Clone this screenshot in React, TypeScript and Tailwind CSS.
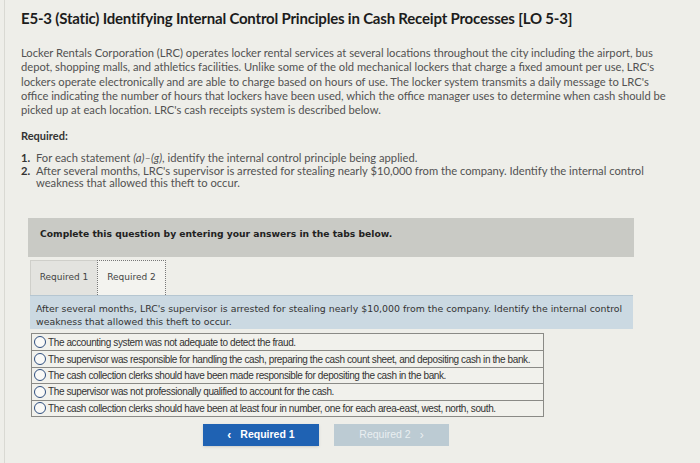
const PARAGRAPH = [
  "Locker Rentals Corporation (LRC) operates locker rental services at several locations throughout the city including the airport, bus",
  "depot, shopping malls, and athletics facilities. Unlike some of the old mechanical lockers that charge a fixed amount per use, LRC's",
  "lockers operate electronically and are able to charge based on hours of use. The locker system transmits a daily message to LRC's",
  "office indicating the number of hours that lockers have been used, which the office manager uses to determine when cash should be",
  "picked up at each location. LRC's cash receipts system is described below.",
];

const OPTIONS = [
  "The accounting system was not adequate to detect the fraud.",
  "The supervisor was responsible for handling the cash, preparing the cash count sheet, and depositing cash in the bank.",
  "The cash collection clerks should have been made responsible for depositing the cash in the bank.",
  "The supervisor was not professionally qualified to account for the cash.",
  "The cash collection clerks should have been at least four in number, one for each area-east, west, north, south.",
];

function Radio() {
  return (
    <span className="shrink-0 w-[12px] h-[12px] rounded-full border-[1.5px] border-[#2f4f7f] bg-white/60 mr-[2px]" />
  );
}

export default function App() {
  return (
    <div className="w-[700px] h-[463px] overflow-hidden bg-[#eeeee9] font-['Lato','Open_Sans',sans-serif]">
      <div className="ml-[4px] h-full border-l border-[#d9d9d3] pl-[16px] pt-[8px]">
        {/* Title */}
        <h1 className="text-[15px] leading-[20px] font-bold text-[#1c1c1c] tracking-[-0.2px]">
          E5-3 (Static) Identifying Internal Control Principles in Cash Receipt Processes [LO 5-3]
        </h1>

        {/* Problem text */}
        <p className="mt-[18px] text-[11.2px] leading-[14.3px] text-[#525252] whitespace-nowrap">
          {PARAGRAPH.map((line, i) => (
            <span key={i} className="block">
              {line}
            </span>
          ))}
        </p>

        <p className="mt-[12px] text-[11px] leading-[14px] font-bold text-[#333]">Required:</p>
        <ol className="mt-[9px] text-[11.2px] leading-[12.5px] text-[#525252]">
          <li className="flex">
            <span className="w-[15px] font-bold text-[#333]">1.</span>
            <span>
              For each statement <i>(a)–(g)</i>, identify the internal control principle being applied.
            </span>
          </li>
          <li className="flex">
            <span className="w-[15px] shrink-0 font-bold text-[#333]">2.</span>
            <span className="w-[630px]">
              After several months, LRC's supervisor is arrested for stealing nearly $10,000 from the company. Identify the internal control weakness that allowed this theft to occur.
            </span>
          </li>
        </ol>

        {/* Instruction bar */}
        <div className="mt-[28px] ml-[7px] w-[606px] h-[39px] bg-[#c9cac5] pt-[10px] pl-[12px] font-['DejaVu_Sans',sans-serif] text-[9.2px] leading-[12px] font-bold text-[#222]">
          Complete this question by entering your answers in the tabs below.
        </div>

        {/* Tabs */}
        <div className="mt-[3px] ml-[9px] flex h-[35px] font-['DejaVu_Sans',sans-serif] text-[9px] text-[#444]">
          <div className="w-[67px] flex items-center justify-center bg-[#e3e3df] border-l border-t border-[#cfcfca]">
            Required 1
          </div>
          <div className="w-[69px] flex items-center justify-center bg-[#f3f3ef] border border-b-0 border-dotted border-[#777]">
            Required 2
          </div>
        </div>

        {/* Question panel */}
        <div className="ml-[9px] w-[603px] h-[34px] bg-[#cbd9e2] border-t border-[#b5c6d1] pt-[6px] pl-[6px] font-['DejaVu_Sans',sans-serif] text-[9.4px] leading-[13px] text-[#333]">
          <p className="w-[592px]">
            After several months, LRC's supervisor is arrested for stealing nearly $10,000 from the company. Identify the internal control weakness that allowed this theft to occur.
          </p>
        </div>

        {/* Options */}
        <div className="mt-[4px] ml-[10px] w-[513px] border border-[#8a8a86] bg-[#f1f1ec] font-['Liberation_Sans',sans-serif] text-[10px] tracking-[-0.39px] text-[#333]">
          {OPTIONS.map((opt, i) => (
            <label
              key={i}
              className={
                "flex items-center h-[16.4px] pl-[2px] " + (i > 0 ? "border-t border-[#8a8a86]" : "")
              }
            >
              <Radio />
              <span className="whitespace-nowrap">{opt}</span>
            </label>
          ))}
        </div>

        {/* Navigation */}
        <div className="mt-[7px] ml-[182px] flex gap-[15px] font-['Liberation_Sans',sans-serif] text-[10.5px] font-bold">
          <button className="w-[116px] h-[22px] bg-[#1f62b3] text-white flex items-center justify-center gap-[9px] shadow-sm">
            <span className="text-[12px] leading-none">‹</span>
            <span>Required 1</span>
          </button>
          <button className="w-[115px] h-[22px] bg-[#bccbd3] text-white/70 flex items-center justify-center gap-[9px] font-normal">
            <span>Required 2</span>
            <span className="text-[12px] leading-none">›</span>
          </button>
        </div>
      </div>
    </div>
  );
}
